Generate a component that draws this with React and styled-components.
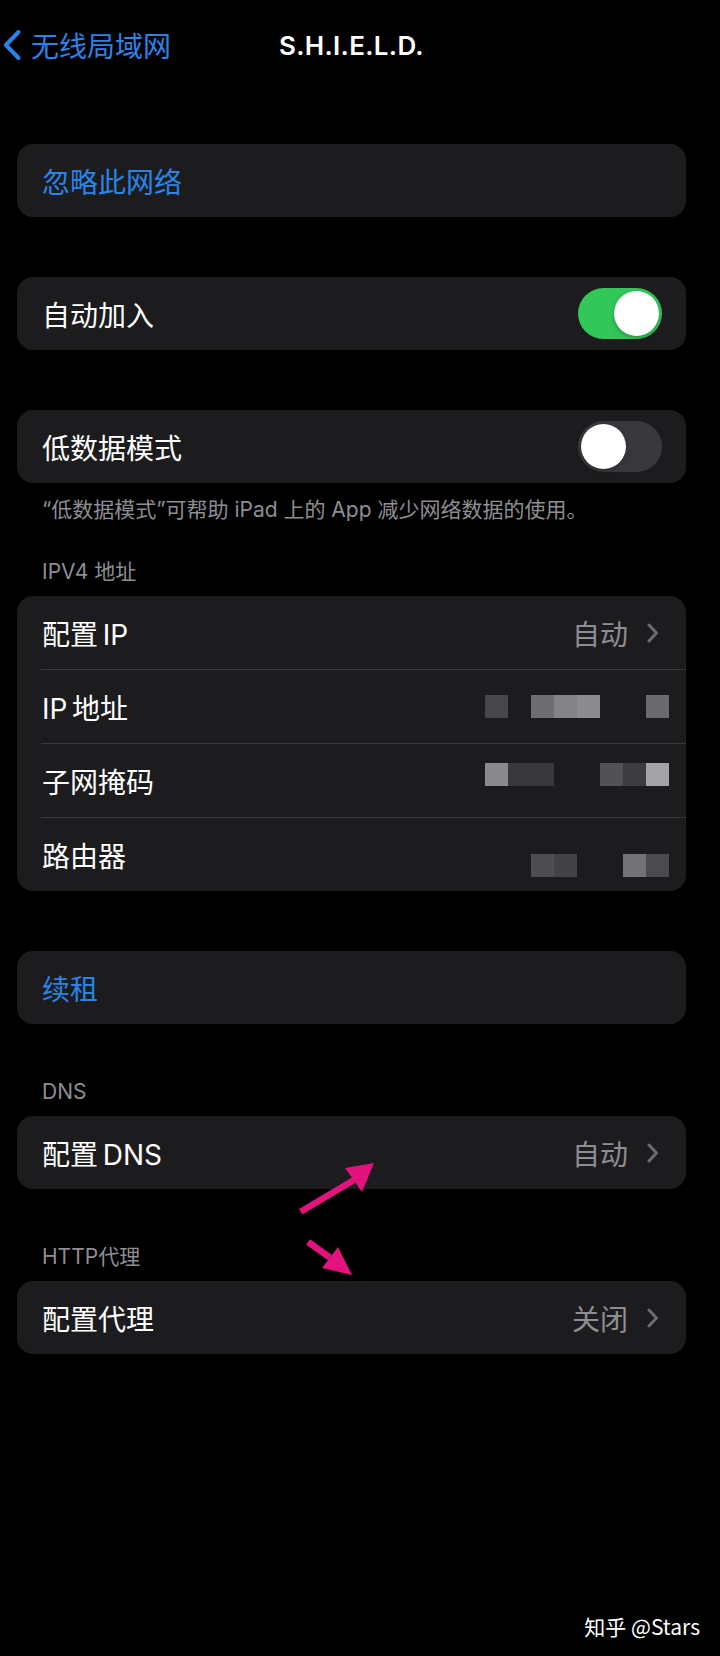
import React from "react";
import styled, { createGlobalStyle } from "styled-components";

const BLUE = "#2a84e8";
const GRAY = "#8e8e93";

const mask = {
  ip: ["#48484b", null, "#6e6e71", "#838386", "#8c8c8f", null, null, "#6a6a6d"],
  subnet: ["#8a8a8d", "#38383a", "#38383a", null, null, "#525255", "#3d3d40", "#a3a3a6"],
  router: [null, null, "#4e4e51", "#434346", null, null, "#737376", "#4b4b4e"],
};

export default function App() {
  return (
    <Page>
      <GlobalStyle />
      <NavBar>
        <BackButton>
          <svg width="20" height="32" viewBox="0 0 20 32">
            <path
              d="M16.5 3 L4 16 L16.5 29"
              fill="none"
              stroke={BLUE}
              strokeWidth="4"
              strokeLinecap="round"
              strokeLinejoin="round"
            />
          </svg>
          无线局域网
        </BackButton>
        <Title>S.H.I.E.L.D.</Title>
        <span />
      </NavBar>

      <List>
        <Group>
          <Row>
            <Label $tint>忽略此网络</Label>
          </Row>
        </Group>

        <Group $gap={60}>
          <Row>
            <Label>自动加入</Label>
            <Switch $on>
              <Knob />
            </Switch>
          </Row>
        </Group>

        <Group $gap={60}>
          <Row>
            <Label>低数据模式</Label>
            <Switch>
              <Knob />
            </Switch>
          </Row>
        </Group>
        <Footnote>“低数据模式”可帮助 iPad 上的 App 减少网络数据的使用。</Footnote>

        <SectionHeader $top={36}>IPV4 地址</SectionHeader>
        <Group>
          <Row>
            <Label>配置{"\u2006"}IP</Label>
            <Value>
              自动
              <Chevron />
            </Value>
          </Row>
          <Divider />
          <Row>
            <Label>IP{"\u2006"}地址</Label>
            <Mosaic cells={mask.ip} />
          </Row>
          <Divider />
          <Row>
            <Label>子网掩码</Label>
            <Mosaic cells={mask.subnet} dy={-6} />
          </Row>
          <Divider />
          <Row>
            <Label>路由器</Label>
            <Mosaic cells={mask.router} dy={11} />
          </Row>
        </Group>

        <Group $gap={60}>
          <Row>
            <Label $tint>续租</Label>
          </Row>
        </Group>

        <SectionHeader $top={55}>DNS</SectionHeader>
        <Group>
          <Row>
            <Label>配置{"\u2006"}DNS</Label>
            <Value>
              自动
              <Chevron />
            </Value>
          </Row>
        </Group>

        <SectionHeader $top={55}>HTTP代理</SectionHeader>
        <Group>
          <Row>
            <Label>配置代理</Label>
            <Value>
              关闭
              <Chevron />
            </Value>
          </Row>
        </Group>
      </List>

      <Arrows width="95" height="130" viewBox="0 0 95 130">
        <line x1="10.7" y1="56.7" x2="64" y2="25" />
        <polygon points="84,8 55,13 72,37" />
        <line x1="18" y1="87" x2="40" y2="102.5" />
        <polygon points="62,120 32,113 48,92" />
      </Arrows>

      <Watermark>知乎 @Stars</Watermark>
    </Page>
  );
}

const Chevron = () => (
  <ChevronIcon width="12" height="20" viewBox="0 0 12 20">
    <path
      d="M2 2 L9.5 10 L2 18"
      fill="none"
      stroke="#6b6b70"
      strokeWidth="3"
      strokeLinecap="round"
      strokeLinejoin="round"
    />
  </ChevronIcon>
);

const Mosaic = ({ cells, dy = 0 }) => (
  <MosaicGrid $dy={dy}>
    {cells.map((c, i) => (
      <Cell key={i} $color={c} />
    ))}
  </MosaicGrid>
);

const GlobalStyle = createGlobalStyle`
  * { box-sizing: border-box; }
  body {
    margin: 0;
    background: #000;
  }
`;

const Page = styled.div`
  position: relative;
  width: 720px;
  min-height: 1656px;
  padding-right: 17px;
  background: #000;
  color: #fff;
  font-family: "Inter", "Noto Sans CJK SC", sans-serif;
`;

const NavBar = styled.div`
  display: grid;
  grid-template-columns: 1fr auto 1fr;
  align-items: center;
  height: 90px;
`;

const BackButton = styled.div`
  display: flex;
  align-items: center;
  gap: 9px;
  padding-left: 2px;
  color: ${BLUE};
  font-family: "Noto Sans CJK SC", sans-serif;
  font-size: 28px;
  line-height: 32px;
`;

const Title = styled.div`
  font-size: 26px;
  font-weight: 600;
  letter-spacing: 0.3px;
  color: #fff;
`;

const List = styled.div`
  padding: 54px 17px 0;
`;

const Group = styled.div`
  margin-top: ${({ $gap }) => ($gap ? `${$gap}px` : "0")};
  background: #1c1c1e;
  border-radius: 16px;
  overflow: hidden;
`;

const Row = styled.div`
  display: flex;
  align-items: center;
  justify-content: space-between;
  height: 73px;
  padding: 0 24px 0 25px;
`;

const Divider = styled.div`
  height: 1px;
  margin-left: 24px;
  background: #3a3a3c;
`;

const Label = styled.div`
  font-size: 28px;
  color: ${({ $tint }) => ($tint ? BLUE : "#fff")};
`;

const Value = styled.div`
  display: flex;
  align-items: center;
  gap: 19px;
  font-size: 28px;
  color: ${GRAY};
`;

const ChevronIcon = styled.svg`
  margin-right: 3px;
`;

const Switch = styled.span`
  display: flex;
  justify-content: ${({ $on }) => ($on ? "flex-end" : "flex-start")};
  align-items: center;
  width: 84px;
  height: 51px;
  padding: 3px;
  border-radius: 26px;
  background: ${({ $on }) => ($on ? "#32c759" : "#39393d")};
`;

const Knob = styled.span`
  width: 45px;
  height: 45px;
  border-radius: 50%;
  background: #fff;
  box-shadow: 0 2px 5px rgba(0, 0, 0, 0.25);
`;

const MosaicGrid = styled.div`
  display: grid;
  grid-template-columns: repeat(8, 23px);
  margin: ${({ $dy }) =>
    $dy >= 0 ? `${$dy * 2}px -7px 0 0` : `0 -7px ${-$dy * 2}px 0`};
`;

const Cell = styled.span`
  height: 23px;
  background: ${({ $color }) => $color || "transparent"};
`;

const Footnote = styled.div`
  margin-top: 14px;
  padding-left: 25px;
  font-size: 21px;
  line-height: 26px;
  color: ${GRAY};
`;

const SectionHeader = styled.div`
  margin: ${({ $top }) => $top}px 0 11px;
  padding-left: 25px;
  font-size: 21px;
  line-height: 26px;
  color: ${GRAY};
`;

const Arrows = styled.svg`
  position: absolute;
  left: 290px;
  top: 1155px;
  pointer-events: none;

  line {
    stroke: #e2137c;
    stroke-width: 6.5;
  }
  polygon {
    fill: #e2137c;
  }
`;

const Watermark = styled.div`
  position: absolute;
  right: 20px;
  bottom: 17px;
  font-family: "Noto Sans CJK SC", sans-serif;
  font-size: 21px;
  line-height: 26px;
  color: #fff;
  text-shadow: 0 0 2px rgba(0, 0, 0, 0.6);
`;
